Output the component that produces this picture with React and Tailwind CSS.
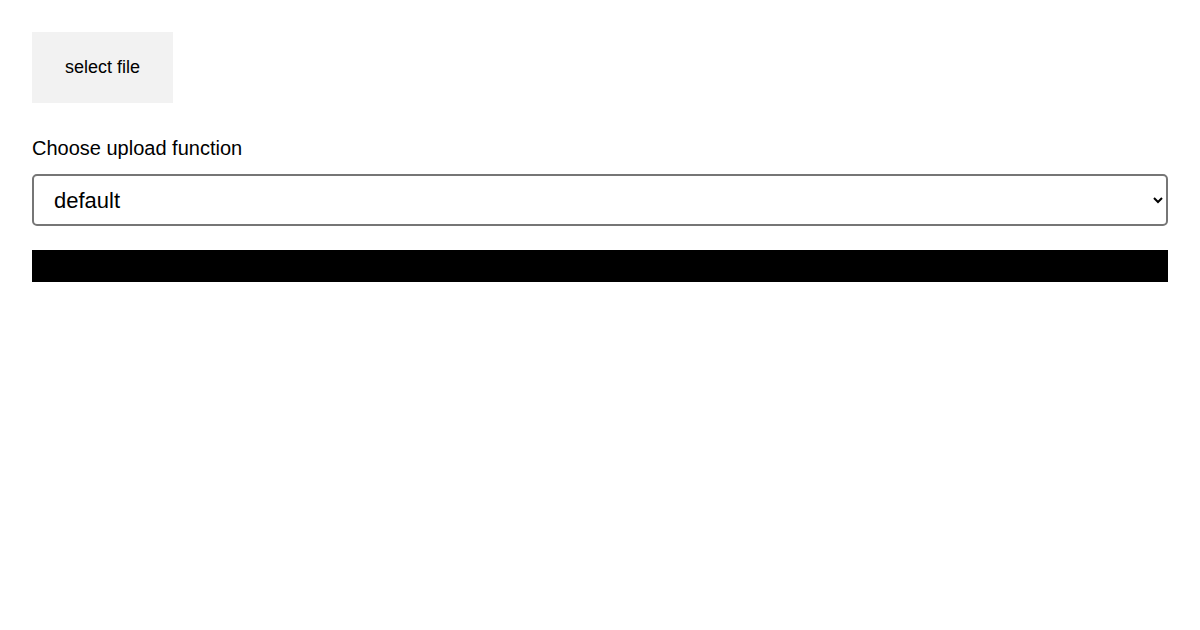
import React from 'react';

const App = () => {
    return (
        <div className="min-h-screen bg-white p-8 text-black" style={{ fontFamily: '"Liberation Sans", Arial, sans-serif' }}>
            <button className="bg-[#f2f2f2] px-[32px] py-6 text-[18px] leading-[23px] text-black">
                <span className="inline-block w-[77px]">select file</span>
            </button>

            <label className="block mt-[34px] mb-[14px] text-[20px] leading-[23px]">
                Choose upload function
            </label>

            <select
                className="block w-full h-[52px] border-2 border-[#767676] rounded-[5px] bg-white pl-4 pr-2 text-[22px] text-black"
                defaultValue="default"
            >
                <option value="default">default</option>
            </select>

            <div className="mt-6 h-8 w-full bg-black" />
        </div>
    );
};

export default App;
